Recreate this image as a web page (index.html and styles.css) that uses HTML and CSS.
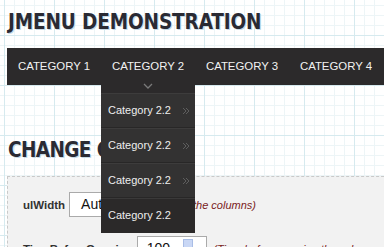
FILE: index.html
```html
<!DOCTYPE html>
<html>
<head>
<meta charset="utf-8">
<link rel="stylesheet" href="styles.css">
</head>
<body>
<div class="page">
  <h1 class="title">JMENU DEMONSTRATION</h1>
  <nav class="menubar">
    <ul class="menu">
      <li class="item">CATEGORY 1</li>
      <li class="item open">CATEGORY 2
        <svg class="caret" width="10" height="6" viewBox="0 0 10 6"><polyline points="1,1 5,5 9,1" fill="none" stroke="#7a7a7a" stroke-width="1.3"/></svg>
        <ul class="sub">
          <li class="sub-item">Category 2.2<svg class="chev" width="8" height="8" viewBox="0 0 8 8"><polyline points="1,1 4,4 1,7" fill="none" stroke="#5e5e5e" stroke-width="1"/><polyline points="4,1 7,4 4,7" fill="none" stroke="#5e5e5e" stroke-width="1"/></svg></li>
          <li class="sub-item">Category 2.2<svg class="chev" width="8" height="8" viewBox="0 0 8 8"><polyline points="1,1 4,4 1,7" fill="none" stroke="#5e5e5e" stroke-width="1"/><polyline points="4,1 7,4 4,7" fill="none" stroke="#5e5e5e" stroke-width="1"/></svg></li>
          <li class="sub-item">Category 2.2<svg class="chev" width="8" height="8" viewBox="0 0 8 8"><polyline points="1,1 4,4 1,7" fill="none" stroke="#5e5e5e" stroke-width="1"/><polyline points="4,1 7,4 4,7" fill="none" stroke="#5e5e5e" stroke-width="1"/></svg></li>
          <li class="sub-item last">Category 2.2</li>
        </ul>
      </li>
      <li class="item">CATEGORY 3</li>
      <li class="item">CATEGORY 4</li>
    </ul>
  </nav>
  <h2 class="title subtitle">CHANGE OPTIONS</h2>
  <div class="panel">
    <div class="row">
      <label class="label">ulWidth</label>
      <div class="field w1">Auto</div>
      <span class="desc">(Width of the columns)</span>
    </div>
    <div class="row">
      <label class="label">TimeBeforeOpening</label>
      <div class="field w2">100<span class="spin"></span></div>
      <span class="desc">(Time before opening the submenu)</span>
    </div>
  </div>
</div>
</body>
</html>
```
FILE: styles.css
```css
html, body {
  margin: 0;
  padding: 0;
}
body {
  width: 384px;
  height: 247px;
  overflow: hidden;
  font-family: "Liberation Sans", Arial, sans-serif;
  background-color: #ffffff;
  background-image:
    linear-gradient(#d6eaef 1px, transparent 1px),
    linear-gradient(90deg, #d6eaef 1px, transparent 1px),
    linear-gradient(#edf5f7 1px, transparent 1px),
    linear-gradient(90deg, #edf5f7 1px, transparent 1px);
  background-size: 50px 50px, 50px 50px, 10px 10px, 10px 10px;
  background-position: 4px 35px, 4px 35px, 4px 5px, 4px 5px;
}
.page {
  padding: 10px 0 0 7px;
}
.title {
  margin: 0;
  padding-left: 1px;
  font-family: "DejaVu Sans Condensed", "DejaVu Sans", sans-serif;
  font-weight: bold;
  font-size: 20.5px;
  line-height: 24px;
  letter-spacing: -0.1px;
  color: #2a2a33;
  text-shadow: 1px 1px 0 #c6d9e6;
}
.menubar {
  margin-top: 14px;
  margin-right: -20px;
  background: #2c2a2b;
  height: 37px;
  position: relative;
  z-index: 5;
}
.menu {
  list-style: none;
  margin: 0;
  padding: 0;
  display: flex;
}
.item {
  position: relative;
  width: 94px;
  text-align: center;
  line-height: 37px;
  font-size: 11.4px;
  color: #f2f2f2;
  white-space: nowrap;
}
.caret {
  position: absolute;
  top: 35px;
  left: 42px;
  display: block;
  z-index: 2;
}
.sub {
  position: absolute;
  top: 37px;
  left: 0;
  width: 94px;
  margin: 0;
  padding: 8px 0 0 0;
  list-style: none;
  background: #2c2a2b;
  text-align: left;
}
.sub-item {
  position: relative;
  height: 35px;
  box-sizing: border-box;
  padding-left: 7px;
  line-height: 34px;
  font-size: 11px;
  color: #eeeeee;
  background: #333232;
  border-bottom: 1px solid #282727;
  box-shadow: inset 0 1px 0 #3d3c3c;
}
.sub-item.last {
  background: #2b2929;
  border-bottom: none;
  box-shadow: inset 0 1px 0 #3a3939;
}
.chev {
  position: absolute;
  right: 5px;
  top: 14px;
}
.subtitle {
  margin-top: 53px;
  letter-spacing: -0.6px;
}
.panel {
  margin-top: 14px;
  margin-right: -20px;
  border: 1px dashed #c9c9c9;
  background: #f2f2f2;
  padding: 15px 15px 20px 15px;
  height: 120px;
}
.row {
  display: flex;
  align-items: center;
  height: 25px;
  margin-bottom: 19px;
}
.label {
  font-weight: bold;
  font-size: 11.5px;
  color: #333333;
  margin-right: 4px;
  white-space: nowrap;
}
.field {
  height: 25px;
  box-sizing: border-box;
  border: 1px solid #aaaaaa;
  background: #ffffff;
  font-size: 14px;
  line-height: 23px;
  padding-left: 11px;
  color: #111111;
  position: relative;
}
.w1 {
  width: 71px;
}
.w2 {
  width: 84px;
  padding-left: 9px;
}
.spin {
  position: absolute;
  right: 13px;
  top: 2px;
  width: 10px;
  height: 19px;
  box-sizing: border-box;
  background: #c9d7f5;
  border: 1px solid #a9bde6;
}
.desc {
  margin-left: 6px;
  font-size: 11px;
  font-style: italic;
  color: #7a1c1c;
  white-space: nowrap;
}
```
